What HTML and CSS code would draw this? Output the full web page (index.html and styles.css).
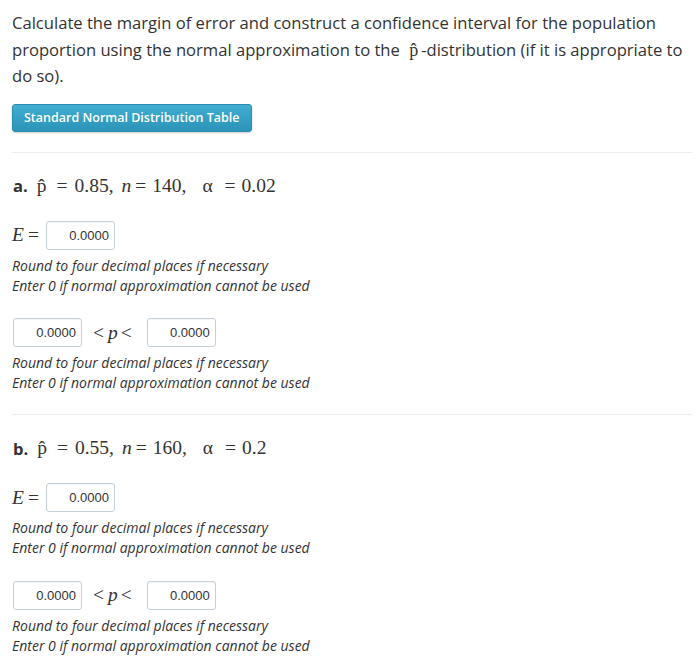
FILE: index.html
```html
<!DOCTYPE html>
<html>
<head>
<meta charset="utf-8">
<link rel="stylesheet" href="styles.css">
</head>
<body>
<div class="page">
  <p class="intro">Calculate the margin of error and construct a confidence interval for the population proportion using the normal approximation to the <span class="phat">p̂</span>-distribution (if it is appropriate to do so).</p>
  <div class="btn-row"><button class="btn">Standard Normal Distribution Table</button></div>

  <section class="part">
    <div class="heading">
      <b class="label">a.</b>
      <span class="m ph">p̂</span><span class="m eq eq1">=</span><span class="m v1">0.85,</span>
      <span class="m it n">n</span><span class="m eq eq2">=</span><span class="m v2">140,</span>
      <span class="m al">α</span><span class="m eq eq3">=</span><span class="m v3">0.02</span>
    </div>
    <div class="row e-row"><span class="m it">E</span><span class="m eq e-eq">=</span><span class="box e-box">0.0000</span></div>
    <div class="hint">Round to four decimal places if necessary<br>Enter 0 if normal approximation cannot be used</div>
    <div class="row int-row"><span class="box">0.0000</span><span class="m lt1">&lt;</span><span class="m it pv">p</span><span class="m lt2">&lt;</span><span class="box box2">0.0000</span></div>
    <div class="hint">Round to four decimal places if necessary<br>Enter 0 if normal approximation cannot be used</div>
  </section>

  <section class="part">
    <div class="heading">
      <b class="label">b.</b>
      <span class="m ph">p̂</span><span class="m eq eq1">=</span><span class="m v1">0.55,</span>
      <span class="m it n">n</span><span class="m eq eq2">=</span><span class="m v2">160,</span>
      <span class="m al">α</span><span class="m eq eq3">=</span><span class="m v3">0.2</span>
    </div>
    <div class="row e-row"><span class="m it">E</span><span class="m eq e-eq">=</span><span class="box e-box">0.0000</span></div>
    <div class="hint">Round to four decimal places if necessary<br>Enter 0 if normal approximation cannot be used</div>
    <div class="row int-row"><span class="box">0.0000</span><span class="m lt1">&lt;</span><span class="m it pv">p</span><span class="m lt2">&lt;</span><span class="box box2">0.0000</span></div>
    <div class="hint">Round to four decimal places if necessary<br>Enter 0 if normal approximation cannot be used</div>
  </section>
</div>
</body>
</html>
```

FILE: styles.css
```css
html, body {
  margin: 0;
  padding: 0;
  background: #fff;
}
.page {
  padding: 10px 8px 0 12px;
  font-family: "Open Sans", "DejaVu Sans", sans-serif;
  color: #333;
}
.intro {
  margin: 0;
  font-size: 16.6px;
  line-height: 26.5px;
}
.phat {
  font-family: "Liberation Serif", serif;
  font-size: 18px;
  margin: 0 3px 0 5px;
}
.btn-row {
  display: flex;
  margin-top: 14px;
}
.btn {
  height: 28px;
  padding: 0 11px;
  border: 1px solid #2b8db0;
  border-radius: 3px;
  background: linear-gradient(#41aed2, #2a93b8);
  color: #fff;
  font-family: "Open Sans", sans-serif;
  font-size: 12.5px;
  font-weight: 600;
  box-shadow: 0 1px 2px rgba(0,0,0,0.2);
}
.part {
  border-top: 1px solid #ececec;
}
.part:first-of-type {
  margin-top: 20px;
}
.heading {
  margin-top: 20px;
  height: 26px;
  display: flex;
  align-items: center;
  font-size: 16.6px;
}
.label {
  font-weight: 700;
  margin-left: 1px;
  margin-right: 9px;
}
.m {
  font-family: "Liberation Serif", serif;
  font-size: 19.5px;
  color: #333;
}
.it {
  font-style: italic;
}
.eq1 { margin-left: 10px; }
.v1 { margin-left: 7px; }
.n { margin-left: 8px; }
.eq2 { margin-left: 4px; }
.v2 { margin-left: 6px; }
.al { margin-left: 16px; }
.eq3 { margin-left: 12px; }
.v3 { margin-left: 6px; }
.row {
  display: flex;
  align-items: center;
}
.e-row {
  margin-top: 22px;
}
.e-eq {
  margin-left: 4px;
}
.e-box {
  margin-left: 7px;
}
.box {
  display: inline-block;
  box-sizing: border-box;
  width: 69px;
  height: 29px;
  line-height: 27px;
  border: 1px solid #c3cfdb;
  border-radius: 3px;
  text-align: right;
  padding-right: 5px;
  font-family: "Liberation Sans", Arial, sans-serif;
  font-size: 13px;
  color: #333;
  box-shadow: inset 0 1px 1px rgba(0,0,0,0.04);
}
.int-row {
  margin-top: 22.5px;
  padding-left: 1px;
}
.lt1 { margin-left: 11px; }
.pv { margin-left: 4px; }
.lt2 { margin-left: 3px; }
.box2 { margin-left: 15px; }
.hint {
  margin-top: 6px;
  font-style: italic;
  font-size: 14px;
  line-height: 20px;
}
.part .hint:last-child {
  margin-bottom: 21px;
}
```
